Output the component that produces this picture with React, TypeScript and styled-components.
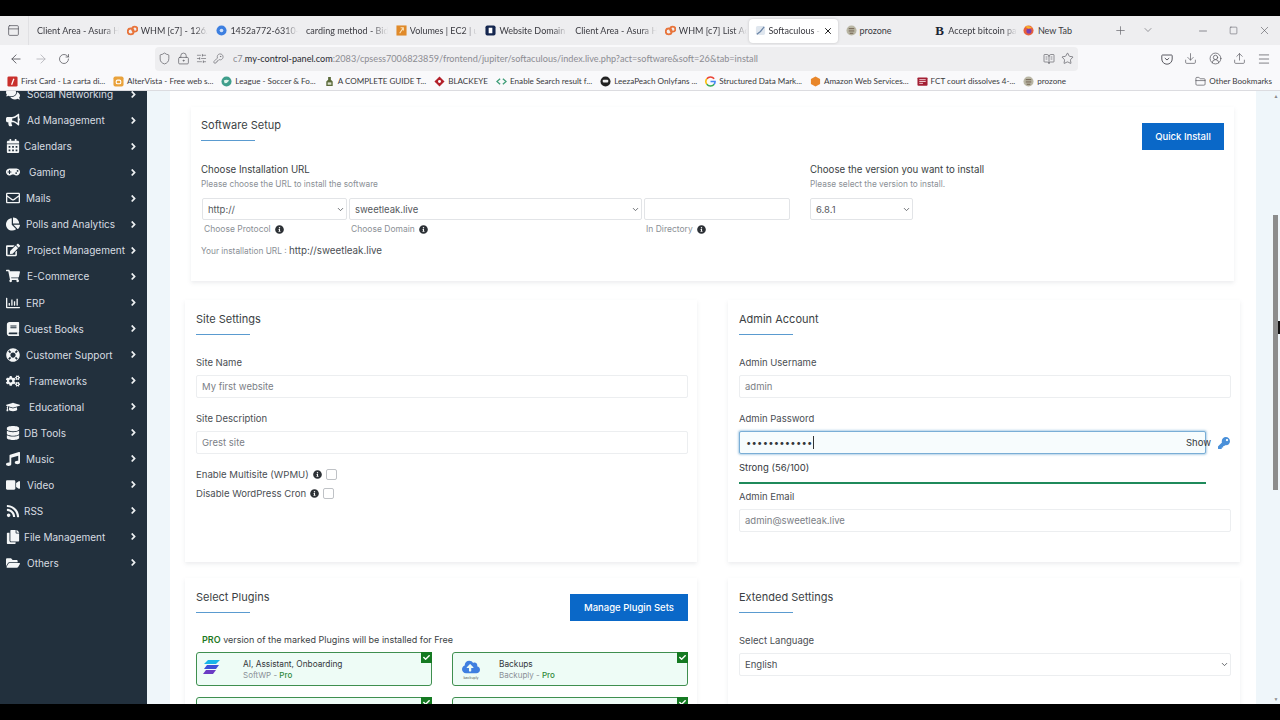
import React from "react";
import styled, { createGlobalStyle } from "styled-components";
import {
  FaAngleRight,
  FaBook,
  FaBullhorn,
  FaCalendarAlt,
  FaChartPie,
  FaCheck,
  FaCloudUploadAlt,
  FaCogs,
  FaComments,
  FaCopy,
  FaDatabase,
  FaEdit,
  FaFolderOpen,
  FaGamepad,
  FaGraduationCap,
  FaInfoCircle,
  FaKey,
  FaLifeRing,
  FaMusic,
  FaRegChartBar,
  FaRegEnvelope,
  FaRss,
  FaShoppingCart,
  FaVideo,
} from "react-icons/fa";
import {
  ArrowLeft,
  ArrowRight,
  BookOpenText,
  ChevronDown,
  CircleUserRound,
  Download,
  FolderClosed,
  KeyRound,
  LockKeyhole,
  Menu,
  Minus,
  PanelTop,
  Plus,
  RotateCw,
  Shield,
  SlidersHorizontal,
  Square,
  Star,
  Upload,
  X,
} from "lucide-react";

const GlobalStyle = createGlobalStyle`
  html, body {
    margin: 0;
    height: 100%;
    overflow: hidden;
    background: #000;
  }
  * {
    box-sizing: border-box;
  }
`;

type FavKind =
  | "cpanel"
  | "blue"
  | "aws"
  | "domain"
  | "soft"
  | "prozone"
  | "firefox"
  | "card"
  | "alter"
  | "league"
  | "guide"
  | "blackeye"
  | "code"
  | "leeza"
  | "google"
  | "hex"
  | "fct";

function Fav({ kind }: { kind: FavKind }) {
  const shapes: Record<FavKind, React.ReactNode> = {
    cpanel: (
      <>
        <circle cx="4" cy="7" r="3.2" fill="none" stroke="#e8743b" strokeWidth="2" />
        <circle cx="8.5" cy="4.5" r="2.8" fill="none" stroke="#e8743b" strokeWidth="2" />
      </>
    ),
    blue: (
      <>
        <circle cx="6" cy="6" r="5.5" fill="#3d7fe0" />
        <circle cx="6" cy="6" r="2" fill="#cfe0f8" />
      </>
    ),
    aws: (
      <>
        <rect x="0.5" y="0.5" width="11" height="11" fill="#e08a2a" />
        <path d="M4 9 L8 3 M5 3h3v3" stroke="#fbe3b8" strokeWidth="1.2" fill="none" />
      </>
    ),
    domain: (
      <>
        <rect x="0.5" y="0.5" width="11" height="11" rx="2" fill="#14264f" />
        <rect x="4" y="3" width="4" height="6" fill="#fff" />
      </>
    ),
    soft: (
      <>
        <rect x="1" y="1" width="10" height="10" rx="2" fill="#dfe6ee" />
        <path d="M2 10 L6 7 L10 2" stroke="#6c86a8" strokeWidth="1.4" fill="none" />
      </>
    ),
    prozone: (
      <>
        <circle cx="6" cy="6" r="5.5" fill="#b9b6a4" />
        <path d="M3 4h6M3 6.5h6M4 9h4" stroke="#6b5a48" strokeWidth="1" />
      </>
    ),
    firefox: (
      <>
        <circle cx="6" cy="6" r="5.5" fill="#e8603a" />
        <circle cx="6.5" cy="6.5" r="2.8" fill="#7b3fb0" />
        <path d="M2 2 Q6 0 10 3 L6 4z" fill="#f7b32b" />
      </>
    ),
    card: (
      <>
        <rect x="0.5" y="0.5" width="11" height="11" rx="1.5" fill="#c9302c" />
        <path d="M7.5 3 L5 9.5" stroke="#fff" strokeWidth="1.4" />
      </>
    ),
    alter: (
      <>
        <rect x="0.5" y="0.5" width="11" height="11" rx="2" fill="#e9a23b" />
        <rect x="3.5" y="4.5" width="5" height="4" rx="1.5" fill="none" stroke="#fff" strokeWidth="1.2" />
      </>
    ),
    league: (
      <>
        <circle cx="6" cy="6" r="5.5" fill="#3f9e8c" />
        <path d="M3 5 Q6 3 9 5 Q7 8 4 8z" fill="#dff3ea" />
      </>
    ),
    guide: (
      <>
        <path d="M4.5 1h3v3l2 2v5h-7V6l2-2z" fill="#5c6b3c" />
        <rect x="4" y="7" width="4" height="2.5" fill="#dfe3cf" />
      </>
    ),
    blackeye: (
      <>
        <path d="M6 0.5 L11.5 6 L6 11.5 L0.5 6z" fill="#b3202a" />
        <circle cx="6" cy="6" r="1.6" fill="#fff" />
      </>
    ),
    code: (
      <path d="M4.5 3 L1 6 L4.5 9 M7.5 3 L11 6 L7.5 9" stroke="#3f9e78" strokeWidth="1.5" fill="none" />
    ),
    leeza: (
      <>
        <circle cx="6" cy="6" r="5.5" fill="#222" />
        <rect x="3" y="4" width="6" height="3" rx="1" fill="#eee" />
      </>
    ),
    google: (
      <>
        <path d="M10 3 A5 5 0 0 0 2 3" stroke="#ea4335" strokeWidth="1.7" fill="none" />
        <path d="M2 3 A5 5 0 0 0 2 9" stroke="#fbbc05" strokeWidth="1.7" fill="none" />
        <path d="M2 9 A5 5 0 0 0 10 9" stroke="#34a853" strokeWidth="1.7" fill="none" />
        <path d="M6 6h5 A5 5 0 0 1 10 9" stroke="#4285f4" strokeWidth="1.7" fill="none" />
      </>
    ),
    hex: <path d="M6 0.5 L11 3.2 V8.8 L6 11.5 L1 8.8 V3.2z" fill="#e8862a" />,
    fct: (
      <>
        <rect x="0.5" y="1.5" width="11" height="9" rx="1" fill="#a32035" />
        <path d="M2.5 4h7M2.5 6h7M2.5 8h4" stroke="#f4d7dc" strokeWidth="1" />
      </>
    ),
  };
  return (
    <FavIcon width="11" height="11" viewBox="0 0 12 12">
      {shapes[kind]}
    </FavIcon>
  );
}

const tabs: { text: string; icon?: FavKind }[] = [
  { text: "Client Area - Asura Hosting" },
  { text: "WHM [c7] - 126.0.0.1", icon: "cpanel" },
  { text: "1452a772-6310-4e1c", icon: "blue" },
  { text: "carding method - Bidencash" },
  { text: "Volumes | EC2 | us-east", icon: "aws" },
  { text: "Website Domain Names", icon: "domain" },
  { text: "Client Area - Asura Hosting" },
  { text: "WHM [c7] List Accounts", icon: "cpanel" },
];

const bookmarks: { text: string; icon: FavKind }[] = [
  { text: "First Card - La carta di...", icon: "card" },
  { text: "AlterVista - Free web s...", icon: "alter" },
  { text: "League - Soccer & Fo...", icon: "league" },
  { text: "A COMPLETE GUIDE T...", icon: "guide" },
  { text: "BLACKEYE", icon: "blackeye" },
  { text: "Enable Search result f...", icon: "code" },
  { text: "LeezaPeach Onlyfans ...", icon: "leeza" },
  { text: "Structured Data Mark...", icon: "google" },
  { text: "Amazon Web Services...", icon: "hex" },
  { text: "FCT court dissolves 4-...", icon: "fct" },
  { text: "prozone", icon: "prozone" },
];

const menu = [
  { label: "Ad Management", Icon: FaBullhorn, w: 21 },
  { label: "Calendars", Icon: FaCalendarAlt, w: 18 },
  { label: "Gaming", Icon: FaGamepad, w: 23 },
  { label: "Mails", Icon: FaRegEnvelope, w: 20 },
  { label: "Polls and Analytics", Icon: FaChartPie, w: 20 },
  { label: "Project Management", Icon: FaEdit, w: 21 },
  { label: "E-Commerce", Icon: FaShoppingCart, w: 21 },
  { label: "ERP", Icon: FaRegChartBar, w: 20 },
  { label: "Guest Books", Icon: FaBook, w: 18 },
  { label: "Customer Support", Icon: FaLifeRing, w: 20 },
  { label: "Frameworks", Icon: FaCogs, w: 23 },
  { label: "Educational", Icon: FaGraduationCap, w: 23 },
  { label: "DB Tools", Icon: FaDatabase, w: 18 },
  { label: "Music", Icon: FaMusic, w: 20 },
  { label: "Video", Icon: FaVideo, w: 21 },
  { label: "RSS", Icon: FaRss, w: 18 },
  { label: "File Management", Icon: FaCopy, w: 18 },
  { label: "Others", Icon: FaFolderOpen, w: 21 },
];

function Info() {
  return (
    <InfoMark>
      <FaInfoCircle />
    </InfoMark>
  );
}

function StackLogo() {
  return (
    <svg width="18" height="16" viewBox="0 0 18 16">
      <path d="M5 1h12l-4 4H1z" fill="#18b5e8" />
      <path d="M4 6h12l-3 4H1z" fill="#3d4fd8" />
      <path d="M3 11h10l-3 4H0z" fill="#6b3bc4" />
    </svg>
  );
}

function PocketIcon() {
  return (
    <svg width="12" height="12" viewBox="0 0 12 12" fill="none" stroke="currentColor" strokeWidth="1">
      <path d="M1.5 2h9a.7.7 0 0 1 .7.7V6a5.2 5.2 0 0 1-10.4 0V2.7A.7.7 0 0 1 1.5 2z" />
      <path d="M3.8 5 L6 7 L8.2 5" />
    </svg>
  );
}

function App() {
  return (
    <Screen>
      <GlobalStyle />
      <Letterbox />
      <Browser>
        <TabBar>
          <SideToggle>
            <PanelTop size={13} strokeWidth={1.4} />
          </SideToggle>
          {tabs.map((t, i) => (
            <Tab key={i}>
              {t.icon && <Fav kind={t.icon} />}
              <TabText>{t.text}</TabText>
            </Tab>
          ))}
          <ActiveTab>
            <Fav kind="soft" />
            <TabText>Softaculous - Softaculous</TabText>
            <X size={10} strokeWidth={2.4} color="#222" />
          </ActiveTab>
          <Tab>
            <Fav kind="prozone" />
            <span>prozone</span>
          </Tab>
          <Tab>
            <BoldB>B</BoldB>
            <TabText>Accept bitcoin payments</TabText>
          </Tab>
          <NewTab>
            <Fav kind="firefox" />
            <span>New Tab</span>
          </NewTab>
          <TabActions>
            <Plus size={13} strokeWidth={1.3} />
            <ChevronDown size={12} strokeWidth={1.3} />
          </TabActions>
          <WindowButtons>
            <Minus size={12} strokeWidth={1.3} />
            <Square size={9} strokeWidth={1.4} />
            <X size={13} strokeWidth={1.1} />
          </WindowButtons>
        </TabBar>
        <NavBar>
          <NavIcons>
            <ArrowLeft size={14} strokeWidth={1.5} />
            <Faint>
              <ArrowRight size={14} strokeWidth={1.5} />
            </Faint>
            <RotateCw size={12} strokeWidth={1.5} />
          </NavIcons>
          <UrlBar>
            <Shield size={13} strokeWidth={1.3} />
            <LockKeyhole size={13} strokeWidth={1.3} />
            <SlidersHorizontal size={11} strokeWidth={1.3} />
            <KeyRound size={11} strokeWidth={1.3} />
            <UrlText>
              c7.<b>my-control-panel.com</b>
              :2083/cpsess7006823859/frontend/jupiter/softaculous/index.live.php?act=software&amp;soft=26&amp;tab=install
            </UrlText>
            <BookOpenText size={12} strokeWidth={1.3} />
            <Star size={13} strokeWidth={1.3} />
          </UrlBar>
          <Toolbar>
            <PocketIcon />
            <Download size={13} strokeWidth={1.3} />
            <CircleUserRound size={13} strokeWidth={1.4} />
            <Upload size={13} strokeWidth={1.3} />
            <Menu size={14} strokeWidth={1.3} />
          </Toolbar>
        </NavBar>
        <BookmarkBar>
          {bookmarks.map((b, i) => (
            <Bookmark key={i}>
              <Fav kind={b.icon} />
              {b.text}
            </Bookmark>
          ))}
          <OtherBookmarks>
            <FolderClosed size={11} strokeWidth={1.3} />
            Other Bookmarks
          </OtherBookmarks>
        </BookmarkBar>
        <Page>
          <Sidebar>
            <SidebarList>
              <SideItem $iconWidth={21}>
                <FaComments />
                <span>Social Networking</span>
                <FaAngleRight />
              </SideItem>
              {menu.map(({ label, Icon, w }) => (
                <SideItem key={label} $iconWidth={w}>
                  <Icon />
                  <span>{label}</span>
                  <FaAngleRight />
                </SideItem>
              ))}
            </SidebarList>
          </Sidebar>
          <Main>
            <WideCard>
              <SetupHead>
                <div>
                  <CardTitle>Software Setup</CardTitle>
                  <TitleRule />
                </div>
                <BlueButton $w={82} $h={27}>Quick Install</BlueButton>
              </SetupHead>
              <SetupRow>
                <div>
                  <SubHead>Choose Installation URL</SubHead>
                  <Hint>Please choose the URL to install the software</Hint>
                  <UrlFields $inset={1}>
                    <UrlField $w={145}>
                      <Box>
                        http://
                        <ChevronDown size={9} strokeWidth={2.2} />
                      </Box>
                      <FieldNote>
                        Choose Protocol <Info />
                      </FieldNote>
                    </UrlField>
                    <UrlField $w={293}>
                      <Box>
                        sweetleak.live
                        <ChevronDown size={9} strokeWidth={2.2} />
                      </Box>
                      <FieldNote>
                        Choose Domain <Info />
                      </FieldNote>
                    </UrlField>
                    <UrlField $w={146}>
                      <Box />
                      <FieldNote>
                        In Directory <Info />
                      </FieldNote>
                    </UrlField>
                  </UrlFields>
                  <InstallUrl>
                    Your installation URL : <strong>http://sweetleak.live</strong>
                  </InstallUrl>
                </div>
                <div>
                  <SubHead>Choose the version you want to install</SubHead>
                  <Hint>Please select the version to install.</Hint>
                  <UrlFields>
                    <UrlField $w={103}>
                      <Box>
                        6.8.1
                        <ChevronDown size={9} strokeWidth={2.2} />
                      </Box>
                    </UrlField>
                  </UrlFields>
                </div>
              </SetupRow>
            </WideCard>
            <Columns>
              <Card $h={262}>
                <CardTitle>Site Settings</CardTitle>
                <TitleRule />
                <FieldLabel>Site Name</FieldLabel>
                <TextBox>My first website</TextBox>
                <FieldLabel $top={14}>Site Description</FieldLabel>
                <TextBox>Grest site</TextBox>
                <CheckRows>
                  <CheckRow>
                    Enable Multisite (WPMU) <Info />
                    <CheckBox />
                  </CheckRow>
                  <CheckRow>
                    Disable WordPress Cron <Info />
                    <CheckBox />
                  </CheckRow>
                </CheckRows>
              </Card>
              <Card $h={262}>
                <CardTitle>Admin Account</CardTitle>
                <TitleRule />
                <FieldLabel>Admin Username</FieldLabel>
                <TextBox>admin</TextBox>
                <FieldLabel $top={14}>Admin Password</FieldLabel>
                <PasswordRow>
                  <PasswordBox>
                    <span>••••••••••••</span>
                    <Caret />
                    <ShowText>Show</ShowText>
                  </PasswordBox>
                  <KeyMark>
                    <FaKey />
                  </KeyMark>
                </PasswordRow>
                <Strength>Strong (56/100)</Strength>
                <StrengthBar />
                <FieldLabel $top={6}>Admin Email</FieldLabel>
                <TextBox>admin@sweetleak.live</TextBox>
              </Card>
              <Card>
                <PluginHead>
                  <div>
                    <CardTitle>Select Plugins</CardTitle>
                    <TitleRule />
                  </div>
                  <BlueButton $w={118} $h={27}>Manage Plugin Sets</BlueButton>
                </PluginHead>
                <ProNote>
                  <b>PRO</b> version of the marked Plugins will be installed for Free
                </ProNote>
                <PluginGrid>
                  <Plugin>
                    <PluginLogo>
                      <StackLogo />
                    </PluginLogo>
                    <PluginText>
                      <PluginName>AI, Assistant, Onboarding</PluginName>
                      <PluginBy>
                        SoftWP - <b>Pro</b>
                      </PluginBy>
                    </PluginText>
                    <Tick>
                      <FaCheck />
                    </Tick>
                  </Plugin>
                  <Plugin>
                    <PluginLogo>
                      <CloudMark>
                        <FaCloudUploadAlt />
                        <small>backuply</small>
                      </CloudMark>
                    </PluginLogo>
                    <PluginText>
                      <PluginName>Backups</PluginName>
                      <PluginBy>
                        Backuply - <b>Pro</b>
                      </PluginBy>
                    </PluginText>
                    <Tick>
                      <FaCheck />
                    </Tick>
                  </Plugin>
                  <Plugin>
                    <Tick>
                      <FaCheck />
                    </Tick>
                  </Plugin>
                  <Plugin>
                    <Tick>
                      <FaCheck />
                    </Tick>
                  </Plugin>
                </PluginGrid>
              </Card>
              <Card>
                <CardTitle>Extended Settings</CardTitle>
                <TitleRule />
                <FieldLabel>Select Language</FieldLabel>
                <TextBox $dark>
                  English
                  <ChevronDown size={9} strokeWidth={2.2} />
                </TextBox>
              </Card>
            </Columns>
          </Main>
          <ScrollBar>
            <ScrollArrow>▲</ScrollArrow>
            <ScrollThumb />
            <ScrollArrow>▼</ScrollArrow>
          </ScrollBar>
          <Cursor />
        </Page>
      </Browser>
      <Letterbox />
    </Screen>
  );
}

const Screen = styled.div`
  width: 1280px;
  height: 720px;
  display: flex;
  flex-direction: column;
  background: #000;
  overflow: hidden;
`;

const Letterbox = styled.div`
  height: 16px;
  flex: none;
  background: #000;
`;

const Browser = styled.div`
  flex: 1;
  min-height: 0;
  display: flex;
  flex-direction: column;
  font-family: Lato, "Open Sans", sans-serif;
  color: #3a3a40;
`;

const FavIcon = styled.svg`
  flex: none;
`;

const TabBar = styled.div`
  height: 29px;
  flex: none;
  display: flex;
  align-items: center;
  background: #eeeef0;
  font-size: 9px;
`;

const SideToggle = styled.div`
  width: 29px;
  height: 29px;
  flex: none;
  display: flex;
  align-items: center;
  padding-left: 7px;
  color: #55555c;
  border-right: 1px solid #e0e0e3;
`;

const Tab = styled.div`
  width: 89.7px;
  height: 24px;
  flex: none;
  display: flex;
  align-items: center;
  gap: 3px;
  padding-left: 8px;
  white-space: nowrap;
  overflow: hidden;
`;

const NewTab = styled(Tab)`
  gap: 4px;
  padding-left: 6px;
  width: 70px;
`;

const TabText = styled.span`
  flex: 1;
  min-width: 0;
  overflow: hidden;
  -webkit-mask-image: linear-gradient(to right, #000 80%, transparent);
  mask-image: linear-gradient(to right, #000 80%, transparent);
`;

const ActiveTab = styled(Tab)`
  width: 89px;
  margin-left: 2px;
  padding: 0 5px 0 6px;
  gap: 3px;
  background: #fff;
  border-radius: 4px;
  box-shadow: 0 0 3px rgba(0, 0, 0, 0.18);

  ${TabText} {
    -webkit-mask-image: linear-gradient(to right, #000 88%, transparent);
    mask-image: linear-gradient(to right, #000 88%, transparent);
  }
`;

const BoldB = styled.span`
  width: 10px;
  font-family: "Liberation Serif", serif;
  font-weight: 700;
  font-size: 13px;
  color: #1b2433;
`;

const TabActions = styled.div`
  margin-left: 27px;
  width: 40px;
  display: flex;
  justify-content: space-between;
  color: #66666c;
`;

const WindowButtons = styled.div`
  margin-left: auto;
  width: 74px;
  margin-right: 9px;
  display: flex;
  align-items: center;
  justify-content: space-between;
  color: #55555c;
`;

const NavBar = styled.div`
  height: 27px;
  flex: none;
  display: flex;
  align-items: center;
  background: #f9f9fb;
`;

const NavIcons = styled.div`
  width: 155px;
  flex: none;
  padding: 0 85px 0 9px;
  display: flex;
  align-items: center;
  justify-content: space-between;
  gap: 10px;
  color: #55555c;
`;

const Faint = styled.span`
  display: flex;
  color: #b5b5ba;
`;

const UrlBar = styled.div`
  width: 923px;
  height: 24px;
  flex: none;
  display: flex;
  align-items: center;
  gap: 6px;
  padding: 0 4px 0 3px;
  background: #eeeef0;
  border-radius: 4px;
  color: #5b5b62;
`;

const UrlText = styled.div`
  flex: 1;
  margin-left: 3px;
  font-size: 9.15px;
  color: #8c8c92;
  white-space: nowrap;
  overflow: hidden;

  b {
    font-weight: 400;
    color: #2b2b30;
  }
`;

const Toolbar = styled.div`
  flex: 1;
  display: flex;
  align-items: center;
  justify-content: space-between;
  padding: 0 9px 0 83px;
  color: #5b5b62;
`;

const BookmarkBar = styled.div`
  height: 19px;
  flex: none;
  display: flex;
  align-items: center;
  gap: 8px;
  padding: 0 8px 0 7px;
  background: #f9f9fb;
  border-bottom: 1px solid #dcdce0;
  font-size: 8.1px;
  white-space: nowrap;
`;

const Bookmark = styled.div`
  display: flex;
  align-items: center;
  gap: 3px;
`;

const OtherBookmarks = styled(Bookmark)`
  margin-left: auto;
`;

const Page = styled.div`
  flex: 1;
  min-height: 0;
  position: relative;
  display: flex;
  background: #fff;
`;

const Sidebar = styled.nav`
  width: 147px;
  flex: none;
  overflow: hidden;
  background: #22303d;
  font-family: Inter, "Liberation Sans", sans-serif;
`;

const SidebarList = styled.div`
  margin-top: -9.9px;
  padding-left: 6px;
`;

const SideItem = styled.div<{ $iconWidth: number }>`
  height: 26.05px;
  display: flex;
  align-items: center;
  color: #d8dde2;
  font-size: 10px;

  > svg:first-child {
    width: 14px;
    height: 14px;
    margin-right: ${(p) => p.$iconWidth - 14}px;
    color: #f4f6f7;
    flex: none;
  }

  span {
    flex: 1;
    white-space: nowrap;
  }

  > svg:last-child {
    width: 11px;
    height: 11px;
    margin-right: 8px;
    color: #eef1f3;
    flex: none;
  }
`;

const Main = styled.main`
  flex: 1;
  min-width: 0;
  overflow: hidden;
  padding: 16px 32px 0 38px;
  background: linear-gradient(
    to right,
    #eff6fa 23px,
    #fff 23px,
    #fff 1109px,
    #eff6fa 1109px
  );
  font-family: Inter, "Liberation Sans", sans-serif;
  color: #3b3f44;
`;

const WideCard = styled.section`
  margin: 0 6px;
  height: 174px;
  padding: 0 10px;
  background: #fff;
  box-shadow: 0 2px 4px rgba(120, 130, 140, 0.14);
`;

const SetupHead = styled.div`
  display: flex;
  justify-content: space-between;
  align-items: flex-start;
  padding-top: 8px;
  height: 54px;

  button {
    margin-top: 8px;
  }
`;

const CardTitle = styled.h3`
  margin: 0;
  height: 20px;
  line-height: 20px;
  font-size: 11px;
  font-weight: 400;
  color: #3b3f44;
`;

const TitleRule = styled.div`
  width: 54px;
  height: 1px;
  margin-top: 5px;
  background: #5a9bd0;
`;

const BlueButton = styled.button<{ $w: number; $h: number }>`
  width: ${(p) => p.$w}px;
  height: ${(p) => p.$h}px;
  flex: none;
  border: 0;
  padding: 0;
  background: #0a68c8;
  color: #fff;
  font: 500 9.5px Inter, "Liberation Sans", sans-serif;
`;

const SetupRow = styled.div`
  display: grid;
  grid-template-columns: 609px 1fr;
  padding-top: 1px;
`;

const SubHead = styled.div`
  height: 15px;
  line-height: 15px;
  font-size: 9.7px;
  color: #3b3f44;
`;

const Hint = styled.div`
  height: 15px;
  line-height: 15px;
  font-size: 8.3px;
  color: #8b9096;
`;

const UrlFields = styled.div<{ $inset?: number }>`
  display: flex;
  gap: 2px;
  margin: 6px 0 0 ${(p) => p.$inset ?? 0}px;
`;

const UrlField = styled.div<{ $w: number }>`
  width: ${(p) => p.$w}px;
  flex: none;
`;

const Box = styled.div`
  height: 22px;
  padding: 0 1px 0 5px;
  display: flex;
  align-items: center;
  justify-content: space-between;
  border: 1px solid #e2e4e7;
  border-radius: 2px;
  font-size: 9.5px;
  color: #55595e;
`;

const FieldNote = styled.div`
  height: 18px;
  padding-left: 2px;
  display: flex;
  align-items: center;
  gap: 4px;
  font-size: 8.5px;
  color: #8b9096;
`;

const InfoMark = styled.span`
  display: inline-flex;
  color: #2d3136;
  font-size: 9px;
`;

const InstallUrl = styled.div`
  margin-top: 7px;
  font-size: 8.3px;
  color: #8b9096;

  strong {
    font-weight: 400;
    font-size: 9.8px;
    color: #4a4e53;
  }
`;

const Columns = styled.div`
  margin-top: 19px;
  display: grid;
  grid-template-columns: 512px 512px;
  column-gap: 31px;
  row-gap: 16px;
`;

const Card = styled.section<{ $h?: number }>`
  height: ${(p) => (p.$h ? `${p.$h}px` : "auto")};
  min-height: 160px;
  padding: 9px 9px 0 11px;
  background: #fff;
  box-shadow: 0 2px 4px rgba(120, 130, 140, 0.14);
`;

const FieldLabel = styled.div<{ $top?: number }>`
  height: 14px;
  line-height: 14px;
  margin-top: ${(p) => p.$top ?? 21}px;
  margin-bottom: 5px;
  font-size: 9.5px;
  color: #4a4e53;
`;

const TextBox = styled.div<{ $dark?: boolean }>`
  height: 23px;
  padding: 0 1px 0 5px;
  display: flex;
  align-items: center;
  justify-content: space-between;
  border: 1px solid #eceef0;
  border-radius: 2px;
  font-size: 9.5px;
  color: ${(p) => (p.$dark ? "#4a4e53" : "#7b8086")};
`;

const CheckRows = styled.div`
  margin-top: 11px;
`;

const CheckRow = styled.div`
  height: 19px;
  display: flex;
  align-items: center;
  gap: 4px;
  font-size: 9.6px;
  color: #4a4e53;
`;

const CheckBox = styled.i`
  display: inline-block;
  width: 11px;
  height: 11px;
  border: 1px solid #bfc2c6;
  border-radius: 2px;
  margin-left: 0;
`;

const PasswordRow = styled.div`
  display: flex;
  align-items: center;
  margin-top: 1px;
`;

const PasswordBox = styled.div`
  width: 467px;
  height: 23px;
  position: relative;
  display: flex;
  align-items: center;
  padding-left: 6px;
  background: #f7fcfd;
  border: 1px solid #7aaed6;
  border-radius: 2px;
  box-shadow: 0 0 2px 1px rgba(122, 174, 214, 0.55);
  font-size: 9.5px;
  letter-spacing: 0.2px;
  color: #33373b;
`;

const Caret = styled.i`
  width: 1px;
  height: 13px;
  background: #333;
`;

const ShowText = styled.span`
  position: absolute;
  right: -6px;
  font-size: 9.5px;
  letter-spacing: 0;
  color: #33373b;
`;

const KeyMark = styled.span`
  margin-left: 12px;
  display: flex;
  font-size: 12px;
  color: #4a90d9;
`;

const Strength = styled.div`
  margin-top: 7px;
  height: 14px;
  line-height: 14px;
  font-size: 9.5px;
  color: #33373b;
`;

const StrengthBar = styled.div`
  width: 467px;
  height: 2px;
  margin-top: 7px;
  background: #1f8a5b;
`;

const PluginHead = styled.div`
  display: flex;
  justify-content: space-between;
  align-items: flex-start;
  height: 45px;

  button {
    margin-top: 7px;
  }
`;

const ProNote = styled.div`
  padding-left: 6px;
  height: 15px;
  line-height: 15px;
  font-size: 9px;
  color: #3b3f44;

  b {
    color: #1f7a1f;
    font-weight: 600;
  }
`;

const PluginGrid = styled.div`
  margin-top: 5px;
  display: grid;
  grid-template-columns: 236px 236px;
  column-gap: 20px;
  row-gap: 11px;
`;

const Plugin = styled.div`
  height: 34px;
  position: relative;
  display: flex;
  align-items: center;
  background: #eefcf6;
  border: 1px solid #3f8f4f;
  border-radius: 3px;
`;

const PluginLogo = styled.div`
  width: 46px;
  flex: none;
  padding-left: 6px;
`;

const PluginText = styled.div`
  padding-top: 2px;
`;

const PluginName = styled.div`
  font-size: 8.3px;
  line-height: 11px;
  color: #33373b;
`;

const PluginBy = styled.div`
  font-size: 8px;
  line-height: 11px;
  color: #8b9096;

  b {
    font-weight: 500;
    color: #2f8a3a;
  }
`;

const CloudMark = styled.div`
  width: 24px;
  display: flex;
  flex-direction: column;
  align-items: center;
  color: #3f7fe0;
  font-size: 18px;
  line-height: 16px;

  small {
    font-size: 3.5px;
    line-height: 4px;
    color: #555;
  }
`;

const Tick = styled.span`
  position: absolute;
  top: -1px;
  right: -1px;
  width: 11px;
  height: 11px;
  display: flex;
  align-items: center;
  justify-content: center;
  background: #157a22;
  color: #fff;
  font-size: 7px;
`;

const ScrollBar = styled.div`
  width: 8px;
  flex: none;
  display: flex;
  flex-direction: column;
  align-items: center;
  background: #eff6fa;
`;

const ScrollArrow = styled.div`
  font-size: 5px;
  line-height: 10px;
  color: #8a8a8a;
`;

const ScrollThumb = styled.div`
  width: 5px;
  height: 275px;
  margin: 114px 1px auto 0;
  background: #8c8c8c;
`;

const Cursor = styled.i`
  position: absolute;
  right: 0;
  top: 230px;
  width: 2px;
  height: 13px;
  background: #111;
`;

export default App;
